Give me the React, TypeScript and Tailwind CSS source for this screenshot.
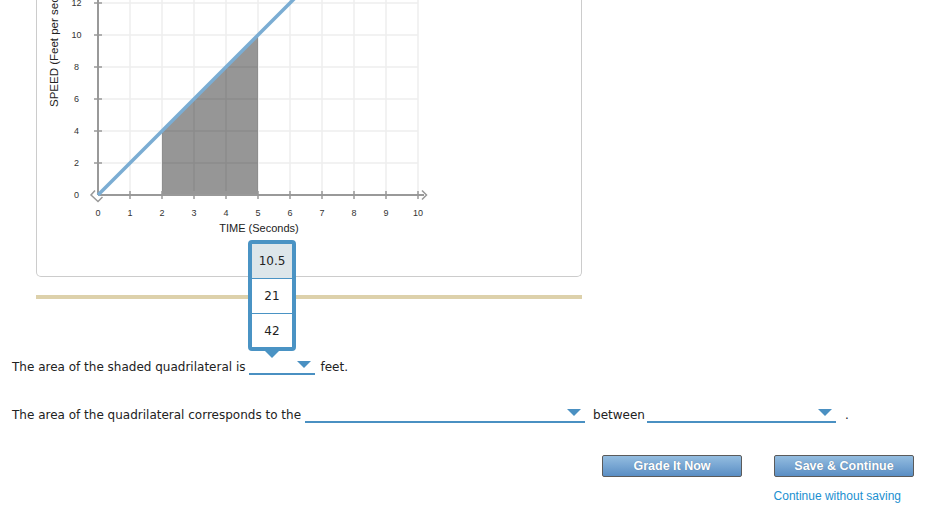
import React from 'react';

function Graph() {
  const ox = 98;
  const oy = 195;
  const xs = Array.from({ length: 11 }, (_, i) => i);
  const ys = [0, 2, 4, 6, 8, 10, 12];

  return (
    <svg width={544} height={276} viewBox="37 0 544 276" className="block">
      {/* grid */}
      {xs.slice(1).map(i => (
        <line key={'gx' + i} x1={ox + i * 32} y1={-10} x2={ox + i * 32} y2={oy} stroke="#eeeeee" strokeWidth={1.5} />
      ))}
      {ys.slice(1).map(v => (
        <line key={'gy' + v} x1={ox} y1={oy - v * 16} x2={418} y2={oy - v * 16} stroke="#eeeeee" strokeWidth={1.5} />
      ))}

      {/* shaded area */}
      <polygon points="162,195 162,131 258,35 258,195" fill="#000" fillOpacity={0.41} />

      {/* axes */}
      <line x1={ox} y1={-10} x2={ox} y2={oy} stroke="#999" strokeWidth={2} />
      <line x1={ox} y1={oy} x2={424} y2={oy} stroke="#999" strokeWidth={2} />
      {xs.slice(1).map(i => (
        <line key={'tx' + i} x1={ox + i * 32} y1={oy - 4} x2={ox + i * 32} y2={oy + 4} stroke="#999" strokeWidth={1.5} />
      ))}
      {ys.slice(1).map(v => (
        <line key={'ty' + v} x1={ox - 4} y1={oy - v * 16} x2={ox + 4} y2={oy - v * 16} stroke="#999" strokeWidth={1.5} />
      ))}
      <path d="M422,190.5 L426.5,195 L422,199.5" fill="none" stroke="#999" strokeWidth={1.5} />
      <path d="M95,190.5 L91,195 L98,201.5 L102.5,197" fill="none" stroke="#999" strokeWidth={1.5} />

      {/* line */}
      <line x1={ox} y1={oy} x2={310} y2={-17} stroke="#7badd3" strokeWidth={3.5} />

      {/* labels */}
      <g fontFamily="'Liberation Sans', Arial, sans-serif" fontSize={9} fill="#333">
        {xs.map(i => (
          <text key={'lx' + i} x={ox + i * 32} y={216} textAnchor="middle">{i}</text>
        ))}
        {ys.map(v => (
          <text key={'ly' + v} x={76.5} y={oy - v * 16 + 3} textAnchor="middle">{v}</text>
        ))}
      </g>
      <text x={259} y={232} textAnchor="middle" fontFamily="'Liberation Sans', Arial, sans-serif" fontSize={11} fill="#222">
        TIME (Seconds)
      </text>
      <text
        transform="translate(58,107) rotate(-90)"
        fontFamily="'Liberation Sans', Arial, sans-serif"
        fontSize={11.5}
        fill="#222"
      >
        SPEED (Feet per second)
      </text>
    </svg>
  );
}

function Blank({ width }: { width: number }) {
  return (
    <div
      className="relative h-[18px] border-b-2 border-[#4a90c2]"
      style={{ width }}
    >
      <span className="absolute right-[4px] top-[4px] w-0 h-0 border-l-[7px] border-r-[7px] border-t-[7px] border-l-transparent border-r-transparent border-t-[#4a90c2]" />
    </div>
  );
}

function Button({ label }: { label: string }) {
  return (
    <button className="w-[140px] h-[22px] rounded-[2px] border border-[#5b5b5b] bg-gradient-to-b from-[#94bde0] to-[#5a8ec4] text-white text-[12.5px] font-bold font-['Liberation_Sans',Arial,sans-serif] [text-shadow:0_0_1px_rgba(0,0,0,0.3)] leading-none">
      {label}
    </button>
  );
}

export default function App() {
  return (
    <div className="relative w-[933px] h-[517px] bg-white overflow-hidden text-[#222] font-['DejaVu_Sans',Verdana,sans-serif]">
      <div className="ml-[36px] w-[546px] h-[277px] border border-t-0 border-[#cccccc] rounded-b-[5px]">
        <Graph />
      </div>

      <div className="ml-[36px] mt-[18px] w-[546px] h-[4px] bg-[#ddd1ab]" />

      <div className="flex items-end pl-[12px] mt-[58px] text-[12px] leading-[16px]">
        <span>The area of the shaded quadrilateral is</span>
        <div className="ml-[3px]">
          <Blank width={66} />
        </div>
        <span className="ml-[6px]">feet.</span>
      </div>

      <div className="flex items-end pl-[12px] mt-[30px] text-[12px] leading-[16px]">
        <span>The area of the quadrilateral corresponds to the</span>
        <div className="ml-[4px]">
          <Blank width={280} />
        </div>
        <span className="ml-[8px]">between</span>
        <div className="ml-[2px]">
          <Blank width={189} />
        </div>
        <span className="ml-[9px]">.</span>
      </div>

      <div className="flex justify-end gap-[32px] pr-[19px] mt-[32px]">
        <Button label="Grade It Now" />
        <Button label="Save & Continue" />
      </div>
      <div className="flex justify-end pr-[32px] mt-[10px]">
        <a className="text-[12px] text-[#1b8fd0] font-['Liberation_Sans',Arial,sans-serif] cursor-pointer">
          Continue without saving
        </a>
      </div>

      {/* open dropdown menu */}
      <div className="absolute left-[248px] top-[240px] w-[48px]">
        <div className="rounded-[4px] border-4 border-[#4a93c4] bg-white text-[12px] text-center">
          <div className="h-[34px] flex items-center justify-center bg-[#dde6ea]">10.5</div>
          <div className="h-[35px] flex items-center justify-center border-t border-[#4a93c4]">21</div>
          <div className="h-[34px] flex items-center justify-center border-t border-[#4a93c4]">42</div>
        </div>
        <div className="mx-auto w-0 h-0 border-l-[7px] border-r-[7px] border-t-[7px] border-l-transparent border-r-transparent border-t-[#4a93c4]" />
      </div>
    </div>
  );
}
